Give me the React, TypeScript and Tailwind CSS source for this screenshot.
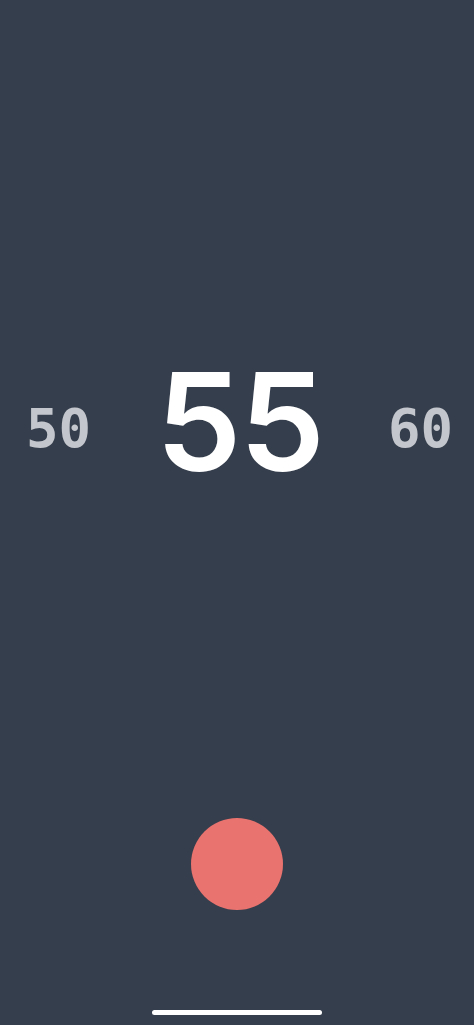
export default function App() {
  return (
    <div className="h-[1025px] w-full bg-[#353e4c] flex flex-col items-center overflow-hidden">
      {/* tempo picker row */}
      <div className="mt-[352px] h-[140px] w-full flex items-center justify-between pl-[26px] pr-[21px]">
        <span className="text-[54px] font-bold text-[#c3c6cc] leading-none mt-[14px] font-['DejaVu_Sans_Mono',monospace]">
          50
        </span>
        <span className="text-[136px] font-semibold text-white leading-none font-['Inter',sans-serif] tracking-[-2px]">
          55
        </span>
        <span className="text-[54px] font-bold text-[#c3c6cc] leading-none mt-[14px] font-['DejaVu_Sans_Mono',monospace]">
          60
        </span>
      </div>

      {/* record button */}
      <button className="mt-[326px] h-[92px] w-[92px] rounded-full bg-[#e9736e]" />

      {/* home indicator */}
      <div className="mt-auto mb-[10px] h-[5px] w-[170px] rounded-full bg-white" />
    </div>
  );
}
